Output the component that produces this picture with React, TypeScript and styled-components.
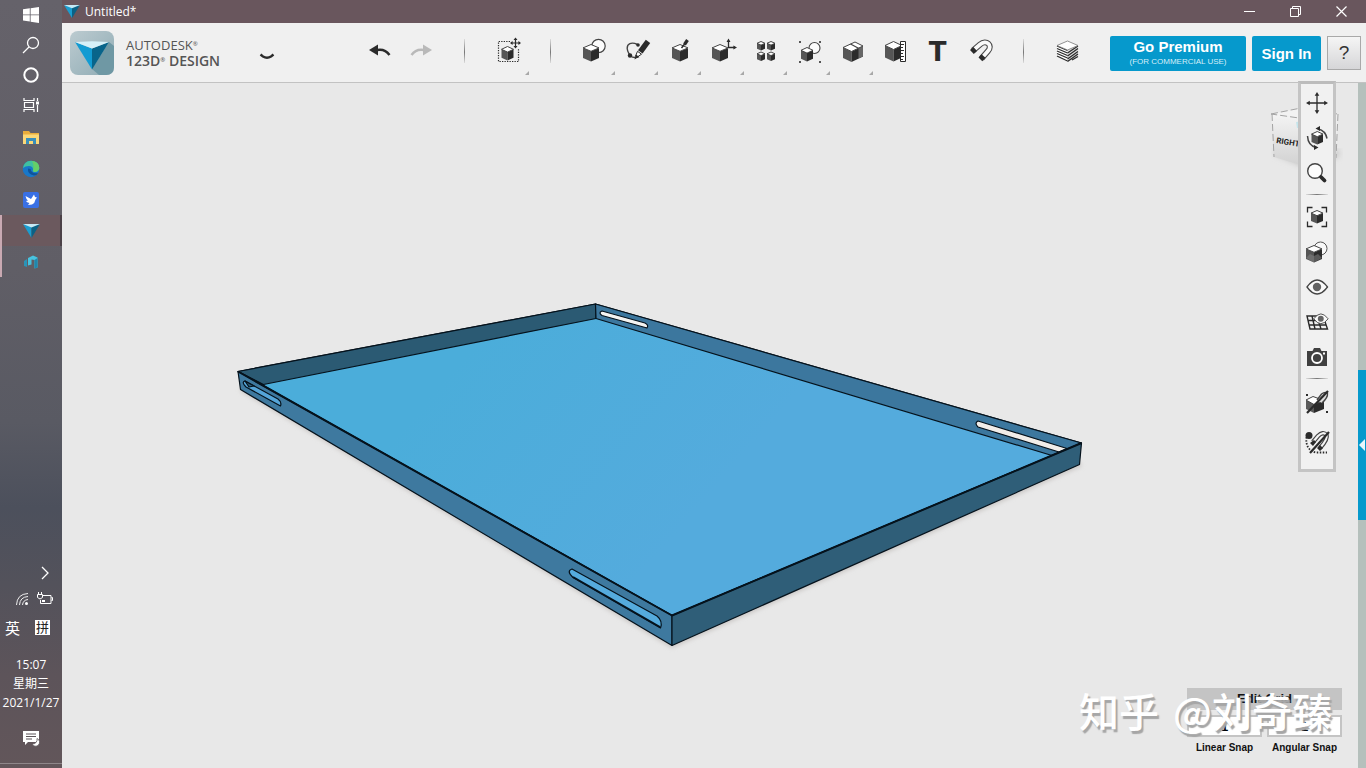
import React from "react";
import styled, { createGlobalStyle } from "styled-components";

const GlobalStyle = createGlobalStyle`
  *, *::before, *::after { box-sizing: border-box; }
  body { margin: 0; background: #e8e8e8; font-family: "Open Sans", "Noto Sans CJK SC", sans-serif; }
  button { font: inherit; color: inherit; margin: 0; padding: 0; border: 0; background: none; cursor: pointer; }
  svg { display: block; }
`;

const DARK = "#2b2b2b";

/* ---------- Page frame ---------- */

const Desktop = styled.div`
  display: grid;
  grid-template-columns: 62px 1fr;
  min-height: 100vh;
`;

const AppWindow = styled.div`
  display: flex;
  flex-direction: column;
  min-width: 0;
`;

/* ---------- Taskbar ---------- */

const Taskbar = styled.nav`
  display: flex;
  flex-direction: column;
  color: #fff;
  background: linear-gradient(#65626a 0%, #605e66 35%, #595a63 55%, #4c505c 66%, #53525b 76%, #5d545a 88%, #62565a 100%);
`;

const TaskGroup = styled.div<{ $row: number }>`
  display: grid;
  grid-auto-rows: ${(p) => p.$row}px;
  margin-bottom: 2px;
`;

const TaskButton = styled.button<{ $active?: boolean; $running?: boolean }>`
  display: flex;
  align-items: center;
  justify-content: center;
  background: ${(p) => (p.$active ? "#6b595e" : "transparent")};
  border-left: 2px solid ${(p) => (p.$running ? "#c9a9b2" : "transparent")};
  border-right: 2px solid ${(p) => (p.$active ? "#4b4147" : "transparent")};
`;

const Tray = styled.div`
  margin-top: auto;
  display: flex;
  flex-direction: column;
  padding-bottom: 4px;
`;

const TrayRow = styled.div`
  display: flex;
  align-items: center;
  justify-content: space-between;
  height: 26px;
  padding: 0 9px 0 15px;
`;

const ImeRow = styled(TrayRow)`
  height: 30px;
  padding: 0 12px 0 5px;
  font-size: 15px;
`;

const ImeBox = styled.span`
  width: 15px;
  height: 15px;
  background: #fff;
  color: #222;
  font-size: 13px;
  line-height: 15px;
  text-align: center;
`;

const Clock = styled.div`
  display: flex;
  flex-direction: column;
  align-items: center;
  margin: 13px 0 2px;
  font-size: 12px;
  line-height: 19px;
`;

const Notify = styled.button`
  display: flex;
  justify-content: center;
  align-items: center;
  height: 50px;
  border-bottom: 1px solid #8e8689;
`;

/* ---------- Title bar ---------- */

const TitleBar = styled.header`
  display: flex;
  align-items: center;
  height: 23px;
  padding: 0 2px;
  background: #69565d;
  color: #fff;
`;

const Title = styled.span`
  margin-left: 5px;
  font-size: 12px;
  line-height: 20px;
`;

const WindowControls = styled.div`
  display: flex;
  margin-left: auto;
`;

const WindowButton = styled.button`
  display: grid;
  place-items: center;
  width: 46px;
  height: 21px;
`;

/* ---------- Application toolbar ---------- */

const Header = styled.div`
  display: flex;
  height: 60px;
  background: #f0f0f0;
  border-bottom: 1px solid #c2c2c2;
`;

const Brand = styled.div`
  display: grid;
  grid-template-columns: 44px 114px 30px;
  column-gap: 12px;
  align-items: center;
  flex: 0 0 295px;
  padding-left: 8px;
`;

const BrandName = styled.div`
  display: grid;
  color: #555;
  font-size: 13px;
  line-height: 15px;
  white-space: nowrap;
  sup { font-size: 6px; line-height: 6px; vertical-align: 4px; }
  strong { font-weight: 600; font-size: 14px; }
`;

const MenuToggle = styled.button`
  display: grid;
  place-items: center;
  height: 30px;
  margin-top: 8px;
`;

const Tools = styled.div`
  display: flex;
`;

const ToolButton = styled.button<{ $menu?: boolean }>`
  position: relative;
  display: grid;
  place-items: center;
  width: 43px;
  height: 56px;
  color: ${DARK};
  &:disabled { color: #b9b9b9; cursor: default; }
  &::after {
    content: "";
    display: ${(p) => (p.$menu ? "block" : "none")};
    position: absolute;
    right: 0;
    bottom: 4px;
    border: 2px solid #a8a8a8;
    border-top-color: transparent;
    border-left-color: transparent;
  }
`;

const TextGlyph = styled.span`
  font: bold 26px/30px "DejaVu Sans", sans-serif;
  padding-top: 2px;
`;

const Divider = styled.span`
  width: 43px;
  height: 56px;
  display: grid;
  place-items: center;
  &::before {
    content: "";
    width: 1px;
    height: 24px;
    background: linear-gradient(#dcdcdc, #777 55%, #dcdcdc);
  }
`;

const Actions = styled.div`
  display: flex;
  gap: 6px;
  margin-left: auto;
  padding: 13px 5px 0 0;
`;

const BlueButton = styled.button<{ $width: number }>`
  width: ${(p) => p.$width}px;
  height: 35px;
  padding-bottom: 1px;
  border-radius: 2px;
  background: #0699cc;
  color: #fff;
  font: bold 15px/17px "Liberation Sans", sans-serif;
  white-space: nowrap;
  small { display: block; font-size: 8px; line-height: 14px; font-weight: normal; color: #d5eef8; }
`;

const HelpButton = styled.button`
  width: 34px;
  height: 34px;
  border: 1px solid #a9a9a9;
  background: linear-gradient(#f5f5f5, #d6d6d8);
  color: #333;
  font: 19px/30px "Liberation Sans", sans-serif;
`;

/* ---------- Workspace ---------- */

const Workspace = styled.main`
  flex: 1;
  display: grid;
  grid-template-columns: 1fr 8px;
  background: #e8e8e8;
`;

const Canvas = styled.section`
  position: relative;
  min-width: 0;
`;

const Scene = styled.svg`
  position: absolute;
  inset: 0;
  width: 100%;
  height: 100%;
`;

const SidePanel = styled.aside`
  background: #b5c0bc;
`;

const PanelHandle = styled.button`
  display: flex;
  align-items: center;
  width: 8px;
  height: 150px;
  margin-top: 287px;
  background: #0699cc;
`;

const ViewCube = styled.svg`
  position: absolute;
  top: 17px;
  right: 15px;
`;

const NavBar = styled.div`
  position: absolute;
  top: -2px;
  right: 22px;
  width: 38px;
  padding: 1px 0 8px;
  border: 3px solid #c4c4c4;
  border-top-color: #bcbcbc;
  background: #f1f1f1;
`;

const NavButton = styled.button<{ $tall?: boolean }>`
  display: grid;
  place-items: center;
  width: 32px;
  height: ${(p) => (p.$tall ? 39 : 35)}px;
`;

const NavDivider = styled.hr`
  height: 1px;
  margin: 4px 5px 4px;
  border: 0;
  background: linear-gradient(90deg, #ddd, #777, #ddd);
`;

const SnapPanel = styled.form`
  position: absolute;
  right: 16px;
  bottom: 12px;
  width: 155px;
  display: grid;
  grid-template-columns: 1fr 1fr;
  column-gap: 5px;
  row-gap: 5px;
  font: bold 10px/16px "Liberation Sans", sans-serif;
  color: #111;
`;

const EditGrid = styled.button`
  grid-column: 1 / -1;
  height: 22px;
  background: #c4c4c4;
  font-size: 13px;
`;

const SnapField = styled.label`
  display: grid;
  row-gap: 3px;
  text-align: center;
  white-space: nowrap;
  input {
    width: 100%;
    height: 22px;
    padding: 0;
    border: 2px solid #c4c4c4;
    border-radius: 0;
    background: #fff;
    text-align: center;
    font: bold 13px "Liberation Sans", sans-serif;
  }
`;

const Watermark = styled.div`
  position: absolute;
  right: 26px;
  bottom: 34px;
  display: flex;
  gap: 14px;
  color: #fff;
  font: 500 40px/48px "Noto Sans CJK SC", sans-serif;
  text-shadow: 2px 3px 1px #a6a6a6;
  white-space: nowrap;
  pointer-events: none;
`;

/* ---------- Icon drawings ---------- */

type CubeProps = { x: number; y: number; w?: number; h?: number };

function Cube({ x, y, w = 16, h = 17 }: CubeProps) {
  const m = x + w / 2;
  const a = y + h * 0.2;
  const b = y + h * 0.4;
  const c = y + h * 0.8;
  const e = y + h;
  return (
    <g>
      <path d={`M${x} ${a}L${m} ${b}V${e}L${x} ${c}Z`} fill="#565656" />
      <path d={`M${x + w} ${a}L${m} ${b}V${e}L${x + w} ${c}Z`} fill={DARK} />
      <path d={`M${m} ${y}L${x + w} ${a}L${m} ${b}L${x} ${a}Z`} fill="#fff" stroke="#444" strokeWidth="1" strokeLinejoin="round" />
    </g>
  );
}

function Icon({ size = 32, children }: { size?: number; children: React.ReactNode }) {
  return (
    <svg width={size} height={size} viewBox={`0 0 ${size} ${size}`} fill="none" stroke="none" aria-hidden="true">
      {children}
    </svg>
  );
}

const undoPath = (
  <>
    <path d="M6 15L15 9.500V20.500Z" fill="currentColor" />
    <path d="M14 15Q22 13.500 26.500 20" stroke="currentColor" strokeWidth="2.400" />
  </>
);

const UndoIcon = () => <Icon>{undoPath}</Icon>;
const RedoIcon = () => (
  <Icon>
    <g transform="translate(32 0) scale(-1 1)">{undoPath}</g>
  </Icon>
);

const SelectIcon = () => (
  <Icon>
    <path d="M18 6.500H6.500V26.500H26.500V14" stroke={DARK} strokeWidth="1.200" strokeDasharray="1.300 1.200" />
    <Cube x={9.5} y={11.5} w={12} h={14} />
    <path d="M23.500 4.500V12.500M19 8H28" stroke={DARK} strokeWidth="1.200" />
    <path d="M23.500 2.500l2 2.600h-4zM23.500 13.500l2-2.600h-4zM18 8l2.600-2v4zM29 8l-2.600-2v4z" fill={DARK} />
  </Icon>
);

const PrimitivesIcon = () => (
  <Icon>
    <circle cx="20.500" cy="11" r="6.700" fill="#fcfcfc" stroke="#444" strokeWidth="1.200" />
    <Cube x={5} y={9.5} />
  </Icon>
);

const SketchIcon = () => (
  <Icon>
    <path d="M16.500 9.500C10 6.500 6 9 6.200 13.500C6.400 17 8 18 9 20.500Q13 24 18 21.500" stroke="#444" strokeWidth="1.400" />
    <path d="M24.800 4.800l4.400 3.200l-7.600 10.500l-4.600-3.300z" fill={DARK} />
    <path d="M16.500 16.300l4 2.900l-4.500 3l-1.500-1z" fill="#fff" stroke={DARK} strokeWidth="1" />
    <path d="M15 19.500l3 2.200l-4.500 2.800z" fill={DARK} />
    <circle cx="17" cy="10" r="1.800" fill={DARK} />
    <circle cx="9" cy="20.500" r="2.200" fill={DARK} />
  </Icon>
);

const ConstructIcon = () => (
  <Icon>
    <Cube x={8} y={9.5} />
    <path d="M23.500 5L20.500 9.500" stroke={DARK} strokeWidth="3.200" />
    <path d="M21 8.500L17.500 13" stroke={DARK} strokeWidth="1.500" />
  </Icon>
);

const ModifyIcon = () => (
  <Icon>
    <Cube x={5} y={9.5} />
    <path d="M21.500 6V12.500H28" stroke={DARK} strokeWidth="1.300" />
    <path d="M21.500 3.500l2 3.600h-4zM30 12.500l-3.600-2v4z" fill={DARK} />
  </Icon>
);

const PatternIcon = () => (
  <Icon>
    <Cube x={7} y={6.5} w={8} h={9} />
    <Cube x={17} y={6.5} w={8} h={9} />
    <Cube x={7} y={17} w={8} h={9} />
    <Cube x={17} y={17} w={8} h={9} />
  </Icon>
);

const GroupingIcon = () => (
  <Icon>
    <circle cx="21.500" cy="13" r="5.500" fill="#fcfcfc" stroke="#444" strokeWidth="1.100" />
    <Cube x={8} y={12.5} w={12} h={14} />
    <path d="M6 6h2v2h-2zM26 6h2v2h-2zM6 26h2v2h-2zM26 26h2v2h-2z" fill="#555" />
  </Icon>
);

const CombineIcon = () => (
  <Icon>
    <path d="M7 12.500L15.500 16.500V27L7 23Z" fill="#565656" />
    <path d="M15.500 16.500L27 11V21.500L15.500 27Z" fill={DARK} />
    <path d="M22.500 13.200l4.500-2.200v10.500l-4.500 2.100z" fill="#666" />
    <path d="M7 12.500L19 7L27 11L15.500 16.500Z" fill="#fff" stroke="#444" strokeLinejoin="round" />
    <path d="M14.500 9L22.500 13.200" stroke="#444" strokeWidth="1.200" />
  </Icon>
);

const MeasureIcon = () => (
  <Icon>
    <Cube x={6} y={6.5} w={17} h={20} />
    <path d="M21.500 6.500h5v20h-5z" fill="#fff" stroke={DARK} />
    <path d="M22 9.500h3M22 12.500h2M22 15.500h3M22 18.500h2M22 21.500h3M22 24.500h2" stroke={DARK} />
  </Icon>
);

const magnetArch = "M8 15.500L15 9.500C21.500 4 28 10.500 23 16L16.500 23.500";

const MagnetIcon = () => (
  <Icon>
    <path d={magnetArch} stroke="#4a4a4a" strokeWidth="6" />
    <path d={magnetArch} stroke="#fafafa" strokeWidth="3.800" />
    <path d="M5 15l3.400-3l3.600 4l-3.200 3zM13.500 22.500l3-3.200l4 3.500l-3.200 3.500z" fill={DARK} />
  </Icon>
);

const MaterialIcon = () => (
  <Icon>
    <path d="M6 10.500L16.500 15V27L6 21.500Z" fill="#fff" />
    <path d="M27 10.500L16.500 15V27L27 21.500Z" fill="#ddd" />
    <path d="M6 11l10.500 4.500M6 13.500L16.500 18M6 16l10.500 4.500M6 18.500L16.500 23M6 21l10.500 5" stroke={DARK} strokeWidth="1.300" />
    <path d="M16.500 18L27 11M16.500 21L27 13.500M16.500 24L27 16.500M16.500 26.500L27 19M21 25l6-3.500" stroke={DARK} strokeWidth="1.300" />
    <path d="M16.500 6L27 10.500L16.500 15L6 10.500Z" fill="#fff" stroke="#777" strokeWidth=".8" />
  </Icon>
);

const arrowsPath = "M14 3l2.300 3.800h-4.600zM14 25l2.300-3.800h-4.600zM3 14l3.800-2.300v4.600zM25 14l-3.800-2.300v4.600z";

const PanIcon = () => (
  <Icon size={28}>
    <path d="M14 6V22M6 14H22" stroke={DARK} strokeWidth="1.300" />
    <path d={arrowsPath} fill={DARK} />
  </Icon>
);

const OrbitIcon = () => (
  <Icon size={28}>
    <Cube x={8.5} y={7.5} w={11.5} h={13} />
    <path d="M15 5Q22.500 6.500 24 14.500M13 23.500Q5 21.500 4.500 12" stroke="#444" strokeWidth="1.500" />
    <path d="M12.500 4.500l4.500-2.500v5zM15.500 23.500l-4.500-2.500v5z" fill={DARK} />
  </Icon>
);

const ZoomIcon = () => (
  <Icon size={28}>
    <circle cx="12" cy="12" r="7.300" fill="#fcfcfc" stroke="#444" strokeWidth="1.400" />
    <path d="M18 18L21.500 21.500" stroke={DARK} strokeWidth="3.800" strokeLinecap="round" />
  </Icon>
);

const FitIcon = () => (
  <Icon size={28}>
    <path d="M9.500 4.500h-5v5M18.500 4.500h5v5M9.500 23.500h-5v-5M18.500 23.500h5v-5" stroke={DARK} strokeWidth="1.300" />
    <Cube x={8} y={7.5} w={12} h={13} />
  </Icon>
);

const ShadingIcon = () => (
  <Icon size={28}>
    <circle cx="17.500" cy="10.500" r="6.500" fill="#f8f8f8" stroke="#555" />
    <Cube x={3} y={7.5} />
    <path d="M3 20l4-4l4 2l4-2l4 4l-8 4.500z" fill="#888" opacity=".5" />
  </Icon>
);

const eye = (
  <>
    <path d="M4 14Q14 0 24.500 14Q14 28 4 14Z" fill="#fafafa" stroke="#444" strokeWidth="1.300" />
    <circle cx="14" cy="14" r="4.200" fill="#636363" />
  </>
);

const EyeIcon = () => <Icon size={28}>{eye}</Icon>;

const GridEyeIcon = () => (
  <Icon size={28}>
    <path d="M4 8H20L24.500 21H7ZM5 12.500H22M6 17H23.500M9 8l3 13M14 8l4 13" stroke={DARK} strokeWidth="1.400" />
    <g transform="translate(8 1) scale(.7)">{eye}</g>
  </Icon>
);

const CameraIcon = () => (
  <Icon size={28}>
    <path d="M4 8h5.500l1.500-3h6l1.500 3H24v15H4z" fill="#404040" />
    <circle cx="14" cy="15" r="5" stroke="#fff" strokeWidth="1.800" fill="#404040" />
    <path d="M20 9.500h2v2h-2z" fill="#fff" />
  </Icon>
);

const SnapOffIcon = () => (
  <Icon size={28}>
    <path d="M3 11l8 4v9l-8-4z" fill="#5a5a5a" />
    <path d="M11 15l10-3v8l-10 4z" fill={DARK} />
    <path d="M3 11l7-3.500l11 4l-10 4z" fill="#fff" stroke="#444" />
    <path d="M14 11l4.500-6q4.500-3 6-.5q.5 4-5.500 9.500" fill="#ddd" stroke="#444" strokeWidth="1.400" />
    <path d="M4 24L25 2" stroke={DARK} strokeWidth="2.200" />
    <path d="M3 5h2v2h-2zM23 22h2v2h-2z" fill={DARK} />
  </Icon>
);

const GroupSnapOffIcon = () => (
  <Icon size={28}>
    <path d="M3.500 9Q2 22 13 24.500H24" stroke={DARK} strokeWidth="1.800" strokeDasharray="1.500 1.500" />
    <path d="M10 14L15 8Q20 3 23.500 7Q25 11 17 20" stroke="#444" strokeWidth="4.500" />
    <path d="M10 14L15 8Q20 3 23.500 7Q25 11 17 20" stroke="#f4f4f4" strokeWidth="2.200" />
    <circle cx="6" cy="7.500" r="3.500" fill={DARK} />
    <path d="M7 15l4-3l2 2l-3 4zM14 20l3-3l3 3l-3 3z" fill={DARK} />
    <path d="M7 25L26 4" stroke={DARK} strokeWidth="2.200" />
  </Icon>
);

function TriangleMark({ width, height }: { width: number; height: number }) {
  return (
    <svg width={width} height={height} viewBox="0 0 34 28" preserveAspectRatio="none" aria-hidden="true">
      <path d="M0 0L17 5V28Z" fill="#1b9dd0" />
      <path d="M34 0L17 5V28Z" fill="#0a6286" />
      <path d="M0 0H34L17 7Z" fill="#c6e9f5" />
    </svg>
  );
}

const BrandLogo = () => (
  <svg width="44" height="44" viewBox="0 0 44 44" aria-hidden="true">
    <defs>
      <linearGradient id="tile" x1="0" y1="0" x2="1" y2="1">
        <stop offset="0" stopColor="#bccbd0" />
        <stop offset="1" stopColor="#8fabb4" />
      </linearGradient>
    </defs>
    <rect width="44" height="44" rx="8" fill="url(#tile)" />
    <path d="M39 11L44 15V36Q44 44 36 44H29L22 38Z" fill="#6f98a4" />
    <path d="M5 11L22 17.500V38.500Z" fill="#129bd2" />
    <path d="M39 11L22 17.500V38.500Z" fill="#08648a" />
    <path d="M5 11L22 10.300L39 11L22 17.500Z" fill="#d6f0f8" />
  </svg>
);

/* ---------- Scene drawing ---------- */

function TrayModel() {
  return (
    <Scene viewBox="0 0 1296 685" role="img" aria-label="Tray model">
      <defs>
        <linearGradient id="floor" x1="470" y1="350" x2="680" y2="530" gradientUnits="userSpaceOnUse">
          <stop offset="0" stopColor="#4badda" />
          <stop offset="1" stopColor="#54abdd" />
        </linearGradient>
        <filter id="soft" x="-5%" y="-5%" width="110%" height="110%">
          <feGaussianBlur stdDeviation="2" />
        </filter>
      </defs>
      <g transform="translate(-62 -83)" stroke="#05121c" strokeWidth="1.200" strokeLinejoin="round">
        <path d="M240 391L672 648L1082 466L1070 450L672 620L245 380Z" fill="#c9c6c4" stroke="none" filter="url(#soft)" />
        <path d="M238 371.500L595.500 304L1081.500 443L672 615.500Z" fill="url(#floor)" />
        <path d="M238 371.500L595.500 304L596 318.500L263.500 384.500Z" fill="#2b5a73" />
        <path d="M595.500 304L1081.500 443L1052 455.500L596 318.500Z" fill="#3c779e" />
        <path d="M602 311L645 323Q649 325 647 328L602 315.500Q598 312.500 602 311Z" fill="#f4f4f2" />
        <path d="M978 421L1067 448.500L1059 452L978 427Q974 423 978 421Z" fill="#f1ede9" />
        <path d="M238 371.500L672 615.500V645.500L240.500 389.500Z" fill="#3e799f" />
        <path d="M1081.500 443L672 615.500V645.500L1079.500 464.500Z" fill="#2f5e78" />
        <path d="M245 381L278 399Q282 402 280.500 406L246 387Q241 382 245 381Z" fill="#55a5d8" />
        <path d="M245 381L254 386L249 387Z" fill="#2b5a73" />
        <path d="M572 569L657 616Q663 621 660.500 628L573 577.500Q566 571 572 569Z" fill="#55abdd" />
        <path d="M573 577L660 627" strokeWidth="2" />
        <path d="M238 371.500L672 615.500L1081.500 443" fill="none" strokeWidth="2" />
      </g>
    </Scene>
  );
}

/* ---------- Data ---------- */

const tools = [
  { name: "Primitives", icon: <PrimitivesIcon />, menu: true },
  { name: "Sketch", icon: <SketchIcon />, menu: true },
  { name: "Construct", icon: <ConstructIcon />, menu: true },
  { name: "Modify", icon: <ModifyIcon />, menu: true },
  { name: "Pattern", icon: <PatternIcon />, menu: true },
  { name: "Grouping", icon: <GroupingIcon />, menu: true },
  { name: "Combine", icon: <CombineIcon />, menu: true },
  { name: "Measure", icon: <MeasureIcon /> },
  { name: "Text", icon: <TextGlyph>T</TextGlyph> },
  { name: "Snap", icon: <MagnetIcon /> },
];

const cameraTools = [
  { name: "Pan", icon: <PanIcon /> },
  { name: "Orbit", icon: <OrbitIcon /> },
  { name: "Zoom", icon: <ZoomIcon /> },
];

const viewTools = [
  { name: "Fit", icon: <FitIcon /> },
  { name: "Shading", icon: <ShadingIcon /> },
  { name: "Visibility", icon: <EyeIcon /> },
  { name: "Grid visibility", icon: <GridEyeIcon /> },
  { name: "Screenshot", icon: <CameraIcon /> },
];

const snapTools = [
  { name: "Toggle snapping", icon: <SnapOffIcon /> },
  { name: "Toggle group snapping", icon: <GroupSnapOffIcon /> },
];

/* ---------- Sections ---------- */

function SystemTaskbar() {
  return (
    <Taskbar aria-label="Taskbar">
      <TaskGroup $row={30}>
        <TaskButton aria-label="Start">
          <svg width="16" height="16" viewBox="0 0 16 16" fill="#fff"><path d="M0 2.300L6.800 1.300V7.500H0zM7.600 1.200L16 0v7.500H7.600zM0 8.300h6.800v6.300L0 13.600zM7.600 8.300H16V16l-8.400-1.200z" /></svg>
        </TaskButton>
        <TaskButton aria-label="Search">
          <svg width="18" height="18" viewBox="0 0 18 18" fill="none" stroke="#fff" strokeWidth="1.300"><circle cx="11" cy="7" r="5.500" /><path d="M7 11L1 17" /></svg>
        </TaskButton>
        <TaskButton aria-label="Cortana">
          <svg width="16" height="16" viewBox="0 0 16 16" fill="none"><circle cx="8" cy="8" r="6.700" stroke="#fff" strokeWidth="2" /></svg>
        </TaskButton>
        <TaskButton aria-label="Task view">
          <svg width="17" height="16" viewBox="0 0 17 16" fill="none" stroke="#fff" strokeWidth="1.200"><path d="M1 1v2.500h10V1M1 15v-2.500h10V15M1.500 5.500h9v5h-9zM14.500 1v3M14.500 8v7" /><path d="M13 4.500h3v3h-3z" fill="#fff" stroke="none" /></svg>
        </TaskButton>
      </TaskGroup>
      <TaskGroup $row={31}>
        <TaskButton aria-label="Files">
          <svg width="18" height="16" viewBox="0 0 18 16"><path d="M1 1h6l1.500 2H17v11H1z" fill="#e9ad3c" /><path d="M1 4.500h16V14H1z" fill="#fbd878" /><path d="M4 8h10v6h-3v-3H7v3H4z" fill="#3a8fbb" /></svg>
        </TaskButton>
        <TaskButton aria-label="Edge">
          <svg width="18" height="18" viewBox="0 0 18 18">
            <circle cx="9" cy="9" r="8.300" fill="#1877c9" />
            <path d="M1 8Q2 1 9 .7Q17 1 17.300 8Q17 12 12.500 12Q10 11.500 11 9.500Q11 6 7 6Q3 6 1 8Z" fill="#3fc0a0" />
            <path d="M10 1Q17 1.500 17.300 8Q16.500 12 12.500 12Q10.500 11.500 11.300 9.500Q12 4 10 1Z" fill="#66cf67" />
            <path d="M6 8.500Q5 14 12 15.500Q15 15.500 16 13Q9 14 8.500 9Z" fill="#0f5499" />
          </svg>
        </TaskButton>
        <TaskButton aria-label="Bird">
          <svg width="16" height="16" viewBox="0 0 16 16"><rect width="16" height="16" rx="2" fill="#3970e4" /><path d="M2.500 4L8 7L11 2.500L12 5L14 5.500L12.500 7.500Q12 11 9 12.500L5 13L6.500 11Q3.500 10.500 3 9L5 8.500Q3 7 2.500 4Z" fill="#fff" /></svg>
        </TaskButton>
        <TaskButton aria-label="123D Design" $active $running>
          <TriangleMark width={17} height={14} />
        </TaskButton>
        <TaskButton aria-label="Modeler" $running>
          <svg width="14" height="14" viewBox="0 0 14 14"><path d="M0 6l3-2v8l-3-1z" fill="#2994b8" /><path d="M4 3L9 .5L13.500 2.500v10l-3 1V5L7.500 4.500v5L4 10.500z" fill="#48c3df" /><path d="M10.500 5l3-2v9.500l-3 1z" fill="#1f87ad" /></svg>
        </TaskButton>
      </TaskGroup>
      <Tray>
        <TrayRow>
          <span />
          <svg width="16" height="16" viewBox="0 0 16 16" fill="none" stroke="#fff" strokeWidth="1.300"><path d="M5 2l6 6l-6 6" /></svg>
        </TrayRow>
        <TrayRow>
          <svg width="14" height="14" viewBox="0 0 14 14" fill="none" stroke="#eee"><path d="M1.500 13Q2 2 13 1.500M4.500 13Q5 5 13 4.500M7.500 13Q8 8 13 7.500" /><circle cx="11.500" cy="11.500" r="1.500" fill="#fff" stroke="none" /></svg>
          <svg width="17" height="14" viewBox="0 0 17 14" fill="none" stroke="#fff"><path d="M7 3.500h8v8H4.500V8M15.500 5.500h1v3h-1M1.500 2.500h5v3q-2.500 3-5 0zM2.500 2V0M5.500 2V0" /><path d="M6 8h3v2h-3z" fill="#fff" stroke="none" /></svg>
        </TrayRow>
        <ImeRow>
          <span>英</span>
          <ImeBox>拼</ImeBox>
        </ImeRow>
        <Clock>
          <span>15:07</span>
          <span>星期三</span>
          <span>2021/1/27</span>
        </Clock>
        <Notify aria-label="Notifications">
          <svg width="17" height="17" viewBox="0 0 17 17"><path d="M0 1h16v11H5l-3 3v-3H0z" fill="#fff" /><path d="M3 4h10M3 6.500h10M3 9h6" stroke="#5d5559" /><path d="M14 8.500a4 4 0 1 1-5 5.500a4.500 4.500 0 0 0 5-5.500z" fill="#fff" stroke="#5d5559" strokeWidth=".8" /></svg>
        </Notify>
      </Tray>
    </Taskbar>
  );
}

function Toolbar() {
  return (
    <Header>
      <Brand>
        <BrandLogo />
        <BrandName>
          <span>AUTODESK<sup>®</sup></span>
          <strong>123D<sup>®</sup> DESIGN</strong>
        </BrandName>
        <MenuToggle aria-label="Menu">
          <svg width="16" height="8" viewBox="0 0 16 8" fill="none"><path d="M1.500 1.500L4 3.500Q8 6 12 3.500L14.500 1.500" stroke={DARK} strokeWidth="2.400" /></svg>
        </MenuToggle>
      </Brand>
      <Tools role="toolbar" aria-label="Tools">
        <ToolButton aria-label="Undo"><UndoIcon /></ToolButton>
        <ToolButton aria-label="Redo" disabled><RedoIcon /></ToolButton>
        <Divider />
        <ToolButton aria-label="Transform" $menu><SelectIcon /></ToolButton>
        <Divider />
        {tools.map((t) => (
          <ToolButton key={t.name} aria-label={t.name} $menu={t.menu}>{t.icon}</ToolButton>
        ))}
        <Divider />
        <ToolButton aria-label="Material"><MaterialIcon /></ToolButton>
      </Tools>
      <Actions>
        <BlueButton $width={136}>
          Go Premium
          <small>(FOR COMMERCIAL USE)</small>
        </BlueButton>
        <BlueButton $width={69}>Sign In</BlueButton>
        <HelpButton>?</HelpButton>
      </Actions>
    </Header>
  );
}

function Orientation() {
  return (
    <ViewCube width="72" height="72" viewBox="0 0 72 72" aria-label="View cube">
      <defs>
        <linearGradient id="face" x1="0" y1="0" x2="0" y2="1">
          <stop offset="0" stopColor="#f4f4f4" />
          <stop offset="1" stopColor="#d0d0d0" />
        </linearGradient>
        <filter id="cubeShadow"><feGaussianBlur stdDeviation="3" /></filter>
      </defs>
      <path d="M4 54L36 68L68 56V50H4Z" fill="#c2c2c2" filter="url(#cubeShadow)" />
      <path d="M42 20L67 14L65 58L40 66Z" fill="#ededed" />
      <path d="M0 14L30 8L67 14L42 20Z" fill="#f2f2f2" />
      <path d="M0 14L42 20L40 68L3 57Z" fill="url(#face)" />
      <path d="M0 14L30 8L67 14L42 20ZM1 14L3 57M67 14L65 58" fill="none" stroke="#a4a4a4" strokeDasharray="7 3" />
      <path d="M25 22L42 20V28L26 28Z" fill="#c5e5ec" />
      <text x="5" y="43" transform="rotate(9 5 43)" fontFamily="Roboto, sans-serif" fontWeight="700" fontSize="8" fill="#222">RIGHT</text>
    </ViewCube>
  );
}

function NavigationBar() {
  return (
    <NavBar role="toolbar" aria-label="Navigation">
      {cameraTools.map((t) => <NavButton key={t.name} aria-label={t.name}>{t.icon}</NavButton>)}
      <NavDivider />
      {viewTools.map((t) => <NavButton key={t.name} aria-label={t.name}>{t.icon}</NavButton>)}
      <NavDivider />
      {snapTools.map((t) => <NavButton key={t.name} aria-label={t.name} $tall>{t.icon}</NavButton>)}
    </NavBar>
  );
}

export default function App() {
  return (
    <>
      <GlobalStyle />
      <Desktop>
        <SystemTaskbar />
        <AppWindow>
          <TitleBar>
            <TriangleMark width={16} height={13} />
            <Title>Untitled*</Title>
            <WindowControls>
              <WindowButton aria-label="Minimize"><svg width="11" height="11" viewBox="0 0 11 11" stroke="#fff"><path d="M0 5.500h11" /></svg></WindowButton>
              <WindowButton aria-label="Restore"><svg width="11" height="11" viewBox="0 0 11 11" fill="none" stroke="#fff"><path d="M.5 2.500h8v8h-8zM2.500 2.500v-2h8v8h-2" /></svg></WindowButton>
              <WindowButton aria-label="Close"><svg width="11" height="11" viewBox="0 0 11 11" stroke="#fff" strokeWidth="1.200"><path d="M.5 .5l10 10M10.500 .5l-10 10" /></svg></WindowButton>
            </WindowControls>
          </TitleBar>
          <Toolbar />
          <Workspace>
            <Canvas>
              <TrayModel />
              <Orientation />
              <NavigationBar />
              <SnapPanel>
                <EditGrid type="button">Edit Grid</EditGrid>
                <SnapField><input defaultValue="1" />Linear Snap</SnapField>
                <SnapField><input defaultValue="1" />Angular Snap</SnapField>
              </SnapPanel>
              <Watermark>
                <span>知乎</span>
                <span>@刘奇臻</span>
              </Watermark>
            </Canvas>
            <SidePanel>
              <PanelHandle aria-label="Open panel">
                <svg width="8" height="12" viewBox="0 0 8 12"><path d="M7 0v12L1 6z" fill="#e9f7fc" /></svg>
              </PanelHandle>
            </SidePanel>
          </Workspace>
        </AppWindow>
      </Desktop>
    </>
  );
}
